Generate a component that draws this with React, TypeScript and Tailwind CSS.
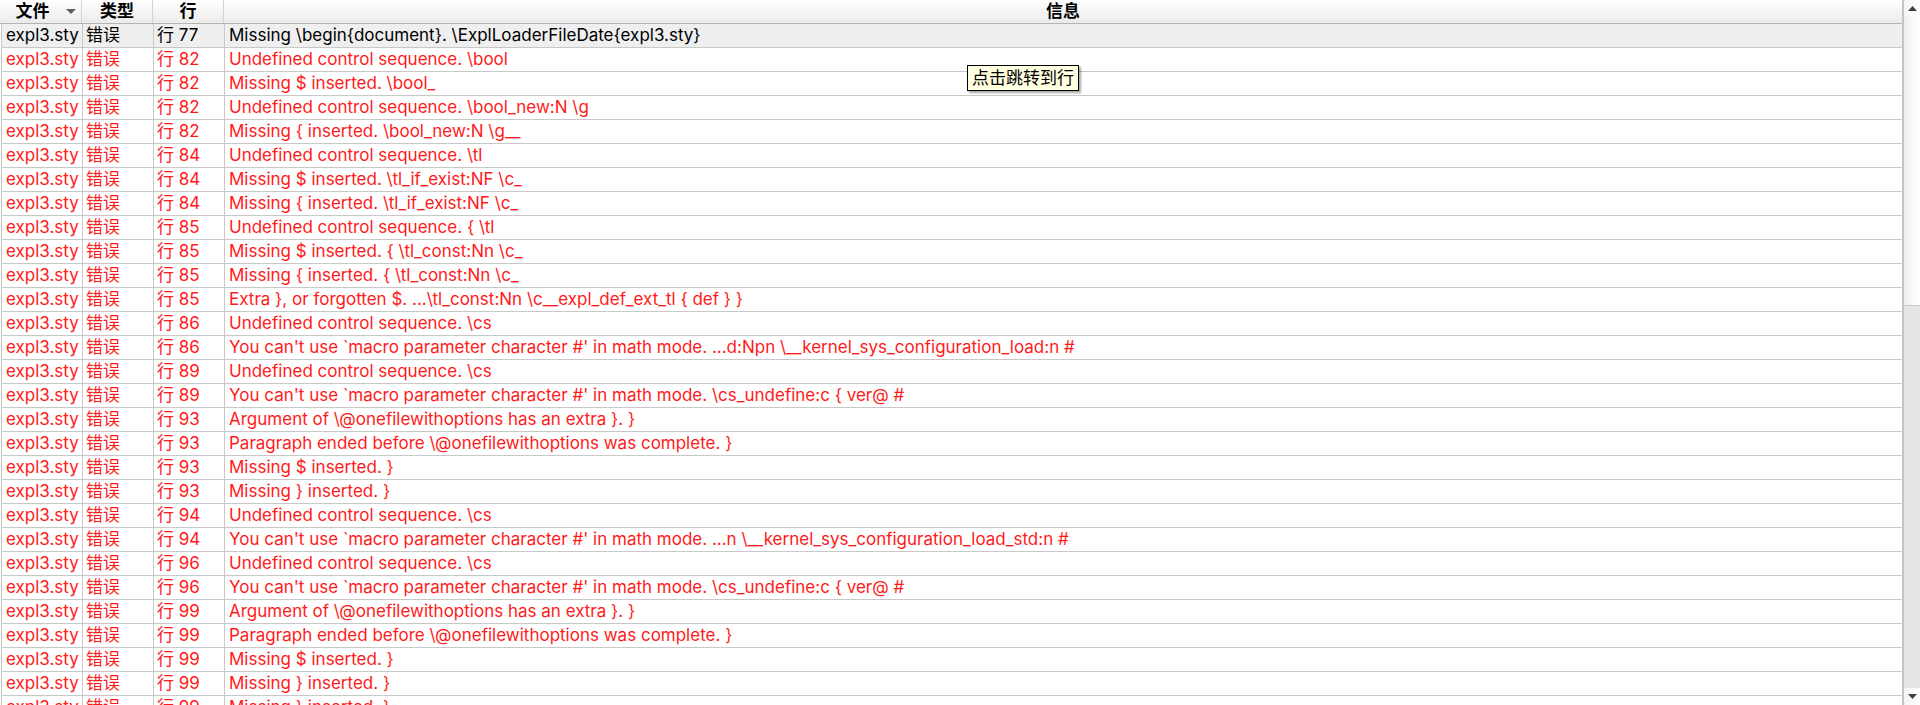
import React from 'react';

type Row = { line: number; msg: string };

const rows: Row[] = [
  { line: 77, msg: 'Missing \\begin{document}. \\ExplLoaderFileDate{expl3.sty}' },
  { line: 82, msg: 'Undefined control sequence. \\bool' },
  { line: 82, msg: 'Missing $ inserted. \\bool_' },
  { line: 82, msg: 'Undefined control sequence. \\bool_new:N \\g' },
  { line: 82, msg: 'Missing { inserted. \\bool_new:N \\g__' },
  { line: 84, msg: 'Undefined control sequence. \\tl' },
  { line: 84, msg: 'Missing $ inserted. \\tl_if_exist:NF \\c_' },
  { line: 84, msg: 'Missing { inserted. \\tl_if_exist:NF \\c_' },
  { line: 85, msg: 'Undefined control sequence. { \\tl' },
  { line: 85, msg: 'Missing $ inserted. { \\tl_const:Nn \\c_' },
  { line: 85, msg: 'Missing { inserted. { \\tl_const:Nn \\c_' },
  { line: 85, msg: 'Extra }, or forgotten $. ...\\tl_const:Nn \\c__expl_def_ext_tl { def } }' },
  { line: 86, msg: 'Undefined control sequence. \\cs' },
  { line: 86, msg: "You can't use `macro parameter character #' in math mode. ...d:Npn \\__kernel_sys_configuration_load:n #" },
  { line: 89, msg: 'Undefined control sequence. \\cs' },
  { line: 89, msg: "You can't use `macro parameter character #' in math mode. \\cs_undefine:c { ver@ #" },
  { line: 93, msg: 'Argument of \\@onefilewithoptions has an extra }. }' },
  { line: 93, msg: 'Paragraph ended before \\@onefilewithoptions was complete. }' },
  { line: 93, msg: 'Missing $ inserted. }' },
  { line: 93, msg: 'Missing } inserted. }' },
  { line: 94, msg: 'Undefined control sequence. \\cs' },
  { line: 94, msg: "You can't use `macro parameter character #' in math mode. ...n \\__kernel_sys_configuration_load_std:n #" },
  { line: 96, msg: 'Undefined control sequence. \\cs' },
  { line: 96, msg: "You can't use `macro parameter character #' in math mode. \\cs_undefine:c { ver@ #" },
  { line: 99, msg: 'Argument of \\@onefilewithoptions has an extra }. }' },
  { line: 99, msg: 'Paragraph ended before \\@onefilewithoptions was complete. }' },
  { line: 99, msg: 'Missing $ inserted. }' },
  { line: 99, msg: 'Missing } inserted. }' },
  { line: 99, msg: 'Missing } inserted. }' },
];

const font = "font-['Inter','Noto_Sans_CJK_SC',sans-serif]";

export default function App() {
  return (
    <div className={`relative flex h-[705px] w-[1920px] overflow-hidden bg-white text-[17px] ${font}`}>
      {/* table */}
      <div className="flex w-[1902px] flex-col">
        {/* header */}
        <div className="flex h-[24px] shrink-0 border-b border-[#b4b4b4] bg-gradient-to-b from-white to-[#ebebeb] font-bold leading-[23px] text-black">
          <div className="relative flex w-[82px] items-center justify-center border-r border-[#d4d4d4] pr-[16px]">
            文件
            <svg className="absolute right-[5px] top-[9px]" width="10" height="6" viewBox="0 0 10 6">
              <path d="M0 0 L10 0 L5 5 Z" fill="#606060" />
            </svg>
          </div>
          <div className="flex w-[71px] items-center justify-center border-r border-[#d4d4d4]">类型</div>
          <div className="flex w-[71px] items-center justify-center border-r border-[#d4d4d4]">行</div>
          <div className="flex flex-1 items-center justify-center">信息</div>
        </div>
        {/* rows */}
        {rows.map((r, i) => (
          <div
            key={i}
            className={`ml-px flex h-[24px] shrink-0 border-b border-l border-[#c8c8c8] leading-[23px] ${
              i === 0 ? 'bg-[#efefef] text-black' : 'text-[#ff1a1a]'
            }`}
          >
            <div className="w-[81px] overflow-hidden whitespace-nowrap border-r border-[#c8c8c8] pl-[4px]">expl3.sty</div>
            <div className="w-[71px] whitespace-nowrap border-r border-[#c8c8c8] pl-[3px]">错误</div>
            <div className="w-[71px] whitespace-nowrap border-r border-[#c8c8c8] pl-[3px]">行 {r.line}</div>
            <div className="flex-1 whitespace-nowrap pl-[4px]">{r.msg}</div>
          </div>
        ))}
      </div>
      <div className="w-[2px] bg-[#c4c4c4]" />
      {/* scrollbar */}
      <div className="flex w-[16px] flex-col">
        <div className="flex h-[16px] items-center justify-center bg-gradient-to-r from-[#f4f4f4] to-white">
          <svg width="9" height="5" viewBox="0 0 9 5">
            <path d="M0 5 L9 5 L4.5 0 Z" fill="#404040" />
          </svg>
        </div>
        <div className="h-[290px] border-b border-[#c8c8c8] bg-gradient-to-r from-[#ececec] via-[#f8f8f8] to-white" />
        <div className="flex-1 bg-[#e6e6e6]" />
        <div className="flex h-[17px] items-center justify-center bg-gradient-to-r from-[#f4f4f4] to-white">
          <svg width="9" height="5" viewBox="0 0 9 5">
            <path d="M0 0 L9 0 L4.5 5 Z" fill="#404040" />
          </svg>
        </div>
      </div>
      {/* tooltip */}
      <div className="absolute left-[967px] top-[65px] h-[26px] whitespace-nowrap border border-black bg-[#ffffe1] px-[4px] leading-[24px] text-black shadow-[2px_2px_2px_rgba(0,0,0,0.35)]">
        点击跳转到行
      </div>
    </div>
  );
}
